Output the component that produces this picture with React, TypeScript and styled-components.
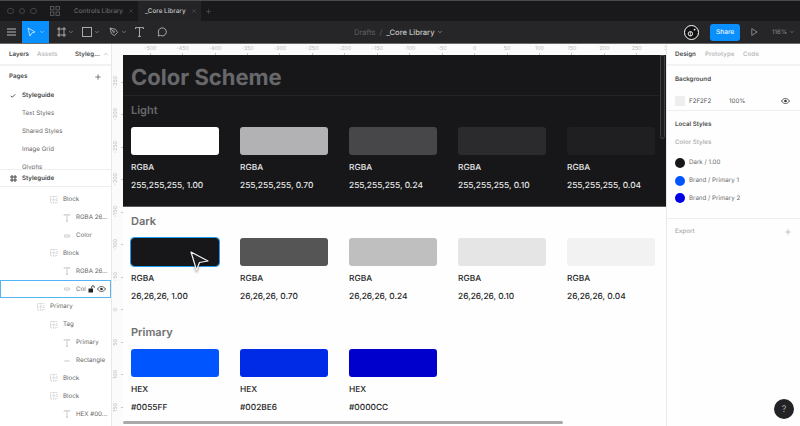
import React from 'react'
import styled, { createGlobalStyle } from 'styled-components'
import { Check, ChevronDown, ChevronUp, Plus, X } from 'lucide-react'

const GlobalStyle = createGlobalStyle`
  html, body {
    margin: 0;
    padding: 0;
    width: 800px;
    height: 426px;
    overflow: hidden;
    background: #fff;
    text-rendering: geometricPrecision;
  }
  * {
    box-sizing: border-box;
  }
`

const Page = styled.div`
  width: 800px;
  height: 426px;
  display: flex;
  flex-direction: column;
  font-family: Inter, 'Liberation Sans', sans-serif;
  overflow: hidden;
`

/* title bar */

const TitleBar = styled.div`
  height: 21px;
  flex: none;
  display: flex;
  align-items: center;
  background: #19191b;
  border-top: 1px solid #4a4a4a;
`

const Lights = styled.div`
  display: flex;
  gap: 5px;
  margin-left: 7px;
  width: 43px;
`

const Light = styled.span`
  width: 6.5px;
  height: 6.5px;
  border-radius: 50%;
  border: 1px solid #434345;
`

const Tab = styled.div<{ $active?: boolean }>`
  height: 20px;
  display: flex;
  align-items: center;
  gap: 5px;
  padding: 0 4px 0 7px;
  font-size: 6.4px;
  color: ${(p) => (p.$active ? '#c8c8c8' : '#68686a')};
  background: ${(p) => (p.$active ? '#242426' : 'transparent')};
  font-weight: 500;
  white-space: nowrap;
`

const TabIcon = styled.span<{ $left?: number; $right?: number }>`
  display: flex;
  color: #5c5c5e;
  margin-left: ${(p) => p.$left ?? 0}px;
  margin-right: ${(p) => p.$right ?? 0}px;
`

/* toolbar */

const ToolBar = styled.div`
  height: 23px;
  flex: none;
  display: flex;
  align-items: center;
  background: #262628;
  border-bottom: 1px solid #6a6a6a;
  color: #b8b8b8;
`

const Burger = styled.div`
  width: 22px;
  display: flex;
  justify-content: center;
`

const MoveTool = styled.div`
  width: 27px;
  height: 22px;
  display: flex;
  align-items: center;
  justify-content: center;
  gap: 3px;
  background: #0a8fff;
  color: #dff0ff;
  margin-right: 8px;
`

const Tool = styled.div<{ $after: number }>`
  display: flex;
  align-items: center;
  gap: 2px;
  margin-right: ${(p) => p.$after}px;
  color: #b8b8b8;
`

const Crumbs = styled.div`
  position: absolute;
  left: 354px;
  top: 21px;
  height: 22px;
  display: flex;
  align-items: center;
  gap: 4px;
  font-size: 7.6px;
  color: #5f5f61;
`

const CrumbCurrent = styled.span`
  display: flex;
  align-items: center;
  gap: 2px;
  color: #c8c8c8;
  font-weight: 500;
`

const ToolRight = styled.div`
  margin-left: auto;
  display: flex;
  align-items: center;
`

const ShareButton = styled.div`
  width: 30px;
  height: 17px;
  margin: 0 11px;
  border-radius: 3px;
  background: #0a8fff;
  color: #e6f3ff;
  font-size: 6.6px;
  font-weight: 500;
  display: flex;
  align-items: center;
  justify-content: center;
`

const ZoomLabel = styled.div`
  margin: 0 5px 0 14px;
  display: flex;
  align-items: center;
  gap: 2px;
  font-size: 6.2px;
  color: #8f8f91;
`

/* main columns */

const Main = styled.div`
  flex: 1;
  min-height: 0;
  display: flex;
  position: relative;
`

const LeftPanel = styled.aside`
  width: 112px;
  flex: none;
  background: #fff;
  border-right: 1px solid #e8e8e8;
  display: flex;
  flex-direction: column;
  overflow: hidden;
`

const PanelTabs = styled.div`
  height: 22px;
  flex: none;
  padding-left: 9px;
  display: flex;
  align-items: center;
  font-size: 6.2px;
  font-weight: 600;
  border-bottom: 2px solid #f2f2f2;
`

const PanelTab = styled.span<{ $on?: boolean; $w: number }>`
  width: ${(p) => p.$w}px;
  color: ${(p) => (p.$on ? '#4c4c4c' : '#bdbdbd')};
  display: flex;
  align-items: center;
  gap: 3px;
  white-space: nowrap;
`

const PagesHead = styled.div`
  height: 21px;
  flex: none;
  padding: 0 9px;
  display: flex;
  align-items: center;
  justify-content: space-between;
  font-size: 6.2px;
  font-weight: 600;
  color: #4c4c4c;
`

const PagesList = styled.div`
  height: 83px;
  flex: none;
  overflow: hidden;
  border-bottom: 1px solid #eeeeee;
`

const PageRow = styled.div<{ $on?: boolean }>`
  height: 17.85px;
  display: flex;
  align-items: center;
  padding-left: 22px;
  position: relative;
  font-size: 6.2px;
  font-weight: ${(p) => (p.$on ? 600 : 400)};
  color: ${(p) => (p.$on ? '#444' : '#666')};
`

const PageCheck = styled.span`
  position: absolute;
  left: 10px;
  display: flex;
  color: #222;
`

const FrameRow = styled.div`
  height: 17px;
  flex: none;
  padding-left: 10px;
  display: flex;
  align-items: center;
  gap: 5px;
  font-size: 6.2px;
  font-weight: 600;
  color: #444;
  border-bottom: 1px solid #eeeeee;
`

const LayerList = styled.div`
  padding-top: 4px;
`

const LayerRow = styled.div<{ $depth: number; $selected?: boolean }>`
  height: 17.85px;
  display: flex;
  align-items: center;
  gap: 5px;
  padding-left: ${(p) => 37 + p.$depth * 13}px;
  font-size: 6.2px;
  color: #666;
  white-space: nowrap;
  ${(p) => (p.$selected ? 'outline: 1px solid #55b4f5; outline-offset: -1px;' : '')}
`

const LayerIcon = styled.span`
  width: 8px;
  height: 8px;
  flex: none;
  display: flex;
  color: #bbbbbb;
`

const RowTools = styled.span`
  display: flex;
  align-items: center;
  gap: 2px;
  margin-left: -3px;
  color: #333;
`

const CanvasColumn = styled.div`
  width: 555px;
  flex: none;
  display: flex;
  flex-direction: column;
  min-height: 0;
`

const TopRuler = styled.div`
  height: 11px;
  flex: none;
  display: flex;
  padding-left: 22px;
  background: #fbfbfb;
  overflow: hidden;
`

const TopMark = styled.div`
  width: 32.45px;
  flex: none;
  display: flex;
  flex-direction: column;
  align-items: center;
  justify-content: flex-end;
  font-size: 5.4px;
  line-height: 8px;
  color: #bcbcbc;
  white-space: nowrap;
`

const TopTick = styled.span`
  width: 1px;
  height: 2px;
  background: #c8c8c8;
`

const CanvasRow = styled.div`
  flex: 1;
  min-height: 0;
  display: flex;
`

const SideRuler = styled.div`
  width: 11px;
  flex: none;
  padding-top: 10.75px;
  background: #fbfbfb;
  overflow: hidden;
`

const SideMark = styled.div`
  height: 32.5px;
  display: flex;
  align-items: center;
  justify-content: flex-end;
  gap: 1px;
`

const SideLabel = styled.span`
  writing-mode: vertical-rl;
  transform: rotate(180deg);
  font-size: 5.4px;
  line-height: 8px;
  color: #bcbcbc;
  white-space: nowrap;
`

const SideTick = styled.span`
  width: 2px;
  height: 1px;
  background: #c8c8c8;
`

const Canvas = styled.main`
  flex: 1;
  min-width: 0;
  position: relative;
  background: #fefefe;
  overflow: hidden;
`

const DarkSection = styled.section`
  height: 152px;
  background: #17171a;
  border-bottom: 1px solid #5a5a5a;
`

const TitleWrap = styled.div`
  height: 41px;
  padding: 5px 0 0 8px;
  display: flex;
  align-items: center;
  border-bottom: 1px solid #232325;
`

const Title = styled.h1`
  margin: 0;
  font-size: 22px;
  font-weight: 700;
  color: #68686a;
`

const Group = styled.div<{ $top: number }>`
  padding: ${(p) => p.$top}px 0 0 8px;
`

const GroupHeading = styled.h2<{ $dark?: boolean }>`
  margin: 0;
  height: 24px;
  font-size: 11px;
  line-height: 14px;
  font-weight: 600;
  color: ${(p) => (p.$dark ? '#68686a' : '#707072')};
`

const SwatchGrid = styled.div`
  display: grid;
  grid-template-columns: repeat(5, 88px);
  column-gap: 21px;
`

const Block = styled.div<{ $dark?: boolean }>`
  color: ${(p) => (p.$dark ? '#e6e6e6' : '#262628')};
  font-size: 8.4px;
  font-weight: 500;
  white-space: nowrap;
`

const Swatch = styled.div<{ $color: string; $selected?: boolean }>`
  position: relative;
  width: 88px;
  height: 28px;
  margin-bottom: 4px;
  border-radius: 3px;
  background: ${(p) => p.$color};
  ${(p) => (p.$selected ? 'outline: 1.5px solid #1f9df2;' : '')}
`

const BlockLabel = styled.div`
  height: 18px;
  line-height: 18px;
`

const Cursor = styled.svg`
  position: absolute;
  left: 58px;
  top: 12px;
  filter: drop-shadow(0 2px 1px rgba(0, 0, 0, 0.35));
`

const VerticalThumb = styled.div`
  position: absolute;
  right: 2px;
  top: 0;
  width: 5px;
  height: 84px;
  border-radius: 0 0 3px 3px;
  background: #1d1d20;
  border: 1px solid #404042;
`

const HorizontalThumb = styled.div`
  position: absolute;
  left: 0;
  bottom: 2px;
  width: 440px;
  height: 3.5px;
  border-radius: 2px;
  background: #a9a9a9;
`

const RightPanel = styled.aside`
  flex: 1;
  min-width: 0;
  background: #fefefe;
  border-left: 1px solid #e8e8e8;
  position: relative;
  margin-left: -1px;
`

const DesignTabs = styled(PanelTabs)`
  padding-left: 8px;
`

const PanelSection = styled.section<{ $last?: boolean }>`
  padding: 0 8px;
  border-bottom: ${(p) => (p.$last ? '0' : '1px solid #eeeeee')};
`

const SectionHead = styled.div<{ $muted?: boolean; $h: number }>`
  height: ${(p) => p.$h}px;
  display: flex;
  align-items: center;
  justify-content: space-between;
  font-size: 6.2px;
  font-weight: 600;
  color: ${(p) => (p.$muted ? '#b4b4b4' : '#4c4c4c')};
`

const BackgroundRow = styled.div`
  height: 18px;
  display: flex;
  align-items: center;
  font-size: 6.2px;
  color: #555;
`

const BackgroundChip = styled.span`
  width: 10px;
  height: 10px;
  background: #eeeeee;
  margin-right: 4px;
`

const BackgroundHex = styled.span`
  width: 40px;
`

const EyeSlot = styled.span`
  margin-left: auto;
  margin-right: 2px;
  display: flex;
  color: #333;
`

const StyleRow = styled.div`
  height: 17.8px;
  display: flex;
  align-items: center;
  gap: 4px;
  font-size: 6.2px;
  color: #6a6a6a;
`

const StyleDot = styled.span<{ $color: string }>`
  width: 10px;
  height: 10px;
  border-radius: 50%;
  background: ${(p) => p.$color};
`

const ColorStyleList = styled.div`
  padding: 8px 0 11px;
`

const HelpButton = styled.div`
  position: absolute;
  right: 6px;
  bottom: 7px;
  width: 20px;
  height: 20px;
  border-radius: 50%;
  background: #232325;
  color: #a8a8a8;
  font-size: 9px;
  display: flex;
  align-items: center;
  justify-content: center;
`

/* drawn icons */

const GridIcon = () => (
  <svg width="10" height="10" viewBox="0 0 10 10" fill="none" stroke="currentColor" strokeWidth="0.9">
    <rect x="0.5" y="0.5" width="3.4" height="3.4" />
    <rect x="6" y="0.5" width="3.4" height="3.4" />
    <rect x="0.5" y="6" width="3.4" height="3.4" />
    <rect x="6" y="6" width="3.4" height="3.4" />
  </svg>
)

const BurgerIcon = () => (
  <svg width="9" height="8" viewBox="0 0 9 8" stroke="currentColor" strokeWidth="1">
    <path d="M0 1h9M0 4h9M0 7h9" />
  </svg>
)

const MoveIcon = () => (
  <svg width="9" height="10" viewBox="0 0 9 10" fill="none" stroke="currentColor" strokeWidth="0.8">
    <path d="M1 1l7 4-3 .8L3 9z" strokeLinejoin="round" />
  </svg>
)

const FrameIcon = () => (
  <svg width="9" height="10" viewBox="0 0 9 10" fill="none" stroke="currentColor" strokeWidth="0.9">
    <path d="M2 0v10M7 0v10M0 2h9M0 8h9" />
  </svg>
)

const RectIcon = () => (
  <svg width="10" height="10" viewBox="0 0 10 10" fill="none" stroke="currentColor" strokeWidth="0.9">
    <rect x="0.5" y="0.5" width="9" height="9" />
  </svg>
)

const PenIcon = () => (
  <svg width="10" height="10" viewBox="0 0 10 10" fill="none" stroke="currentColor" strokeWidth="0.8">
    <path d="M1 1l5.6 1.4 2 3-3.2 3.2-3-2z" strokeLinejoin="round" />
    <path d="M1 1l3 3" />
    <circle cx="4.7" cy="4.7" r="0.8" />
  </svg>
)

const TextIcon = () => (
  <svg width="9" height="10" viewBox="0 0 9 10" fill="none" stroke="currentColor" strokeWidth="0.9">
    <path d="M0.5 2V.6h8V2M4.5.6v8.8M3 9.4h3" />
  </svg>
)

const CommentIcon = () => (
  <svg width="10" height="10" viewBox="0 0 10 10" fill="none" stroke="currentColor" strokeWidth="0.9">
    <path d="M1.2 9l.6-2.2A4 4 0 1 1 3.4 8.400z" strokeLinejoin="round" />
  </svg>
)

const SmallChevron = () => <ChevronDown size={6} strokeWidth={2} />

const PlayIcon = () => (
  <svg width="7" height="8" viewBox="0 0 7 8" fill="none" stroke="#8f8f91" strokeWidth="0.9">
    <path d="M.8.6l5.4 3.4L.8 7.4z" strokeLinejoin="round" />
  </svg>
)

const Avatar = () => (
  <svg width="15" height="15" viewBox="0 0 15 15">
    <circle cx="7.5" cy="7.5" r="7" fill="#111" stroke="#fff" strokeWidth="1" />
    <circle cx="6.4" cy="8.800" r="2.200" fill="none" stroke="#fff" strokeWidth="0.9" />
    <path d="M6.400 6.600V11" stroke="#fff" strokeWidth="0.7" />
    <circle cx="10.600" cy="4.600" r="0.900" fill="#fff" />
  </svg>
)

const HashIcon = () => (
  <svg width="7" height="7" viewBox="0 0 7 7" stroke="#444" strokeWidth="1">
    <path d="M2 0v7M5 0v7M0 2h7M0 5h7" />
  </svg>
)

const EyeIcon = () => (
  <svg width="9" height="6" viewBox="0 0 9 6" fill="none" stroke="currentColor" strokeWidth="0.8">
    <path d="M.5 3C1.500 1.300 3 .5 4.500 .5S7.500 1.300 8.500 3C7.500 4.700 6 5.500 4.500 5.500S1.500 4.700 .5 3z" />
    <circle cx="4.500" cy="3" r="1.300" fill="currentColor" stroke="none" />
  </svg>
)

const UnlockIcon = () => (
  <svg width="7" height="8" viewBox="0 0 7 8" fill="none">
    <rect x="0.500" y="3.500" width="4.500" height="4" fill="#222" />
    <path d="M3.700 3.500V2a1.300 1.300 0 0 1 2.600 0v.8" stroke="#222" strokeWidth="0.8" />
  </svg>
)

const DottedIcon = () => (
  <svg width="8" height="8" viewBox="0 0 8 8" fill="none" stroke="currentColor" strokeWidth="0.8" strokeDasharray="1 1">
    <rect x="0.5" y="0.5" width="6.5" height="6.5" />
    <path d="M3.8 0.5v6.5M0.5 3.8h6.5" />
  </svg>
)

const TextLayerIcon = () => (
  <svg width="8" height="8" viewBox="0 0 8 8" fill="none" stroke="currentColor" strokeWidth="0.8">
    <path d="M1 1.600V.8h6v.8M4 .8v6.400M3 7.200h2" />
  </svg>
)

const RectLayerIcon = () => (
  <svg width="8" height="8" viewBox="0 0 8 8" fill="none" stroke="currentColor" strokeWidth="0.8">
    <rect x="1.200" y="3" width="5.600" height="2" rx="1" />
  </svg>
)

const LineLayerIcon = () => (
  <svg width="8" height="8" viewBox="0 0 8 8" stroke="currentColor" strokeWidth="0.8">
    <path d="M1.200 4h5.600" />
  </svg>
)

type LayerKind = 'block' | 'text' | 'rect' | 'line'

const layerIcons: Record<LayerKind, React.ReactNode> = {
  block: <DottedIcon />,
  text: <TextLayerIcon />,
  rect: <RectLayerIcon />,
  line: <LineLayerIcon />
}

const layers: { name: string; depth: number; kind: LayerKind; selected?: boolean }[] = [
  { name: 'Block', depth: 1, kind: 'block' },
  { name: 'RGBA 26...', depth: 2, kind: 'text' },
  { name: 'Color', depth: 2, kind: 'rect' },
  { name: 'Block', depth: 1, kind: 'block' },
  { name: 'RGBA 26...', depth: 2, kind: 'text' },
  { name: 'Col', depth: 2, kind: 'rect', selected: true },
  { name: 'Primary', depth: 0, kind: 'block' },
  { name: 'Tag', depth: 1, kind: 'block' },
  { name: 'Primary', depth: 2, kind: 'text' },
  { name: 'Rectangle', depth: 2, kind: 'line' },
  { name: 'Block', depth: 1, kind: 'block' },
  { name: 'Block', depth: 1, kind: 'block' },
  { name: 'HEX #00...', depth: 2, kind: 'text' }
]

const pages = ['Styleguide', 'Text Styles', 'Shared Styles', 'Image Grid', 'Glyphs']

const topMarks = [-500, -450, -400, -350, -300, -250, -200, -150, -100, -50, 0, 50, 100, 150, 200, 250, 300]
const sideMarks = [-350, -300, -250, -200, -150, -100, -50, 0, 50, 100, 150]

const lightBlocks = [
  { color: '#ffffff', value: '255,255,255, 1.00' },
  { color: '#b2b1b3', value: '255,255,255, 0.70' },
  { color: '#47474a', value: '255,255,255, 0.24' },
  { color: '#2b2b2d', value: '255,255,255, 0.10' },
  { color: '#1f1f21', value: '255,255,255, 0.04' }
]

const darkBlocks = [
  { color: '#17171a', value: '26,26,26, 1.00', selected: true },
  { color: '#555556', value: '26,26,26, 0.70' },
  { color: '#c0bfc0', value: '26,26,26, 0.24' },
  { color: '#e5e5e6', value: '26,26,26, 0.10' },
  { color: '#f2f2f3', value: '26,26,26, 0.04' }
]

const primaryBlocks = [
  { color: '#0055ff', value: '#0055FF' },
  { color: '#002be6', value: '#002BE6' },
  { color: '#0000cc', value: '#0000CC' }
]

const localStyles = [
  { color: '#17171a', name: 'Dark / 1.00' },
  { color: '#0055ff', name: 'Brand / Primary 1' },
  { color: '#0000e6', name: 'Brand / Primary 2' }
]

interface SwatchesProps {
  label: string
  dark?: boolean
  items: { color: string; value: string; selected?: boolean }[]
}

const Swatches: React.FC<SwatchesProps> = ({ label, dark, items }) => (
  <SwatchGrid>
    {items.map((item) => (
      <Block key={item.value} $dark={dark}>
        <Swatch $color={item.color} $selected={item.selected}>
          {item.selected && (
            <Cursor width="20" height="22" viewBox="0 0 20 22">
              <path d="M2 2l17 9-8.500 1.500L7.500 20z" fill="#1c1c1e" stroke="#f4f4f4" strokeWidth="1.200" strokeLinejoin="round" />
            </Cursor>
          )}
        </Swatch>
        <BlockLabel>{label}</BlockLabel>
        <BlockLabel>{item.value}</BlockLabel>
      </Block>
    ))}
  </SwatchGrid>
)

export default function App() {
  return (
    <Page>
      <GlobalStyle />
      <TitleBar>
        <Lights>
          <Light />
          <Light />
          <Light />
        </Lights>
        <TabIcon $right={7}>
          <GridIcon />
        </TabIcon>
        <Tab>
          Controls Library
          <TabIcon>
            <X size={6} />
          </TabIcon>
        </Tab>
        <Tab $active>
          _Core Library
          <TabIcon>
            <X size={6} />
          </TabIcon>
        </Tab>
        <TabIcon $left={4}>
          <Plus size={7} />
        </TabIcon>
      </TitleBar>
      <ToolBar>
        <Burger>
          <BurgerIcon />
        </Burger>
        <MoveTool>
          <MoveIcon />
          <SmallChevron />
        </MoveTool>
        <Tool $after={8}>
          <FrameIcon />
          <SmallChevron />
        </Tool>
        <Tool $after={9}>
          <RectIcon />
          <SmallChevron />
        </Tool>
        <Tool $after={8}>
          <PenIcon />
          <SmallChevron />
        </Tool>
        <Tool $after={13}>
          <TextIcon />
        </Tool>
        <Tool $after={0}>
          <CommentIcon />
        </Tool>
        <Crumbs>
          Drafts <span>/</span>
          <CrumbCurrent>
            _Core Library
            <SmallChevron />
          </CrumbCurrent>
        </Crumbs>
        <ToolRight>
          <Avatar />
          <ShareButton>Share</ShareButton>
          <PlayIcon />
          <ZoomLabel>
            116%
            <SmallChevron />
          </ZoomLabel>
        </ToolRight>
      </ToolBar>
      <Main>
        <LeftPanel>
          <PanelTabs>
            <PanelTab $on $w={28}>
              Layers
            </PanelTab>
            <PanelTab $w={38}>Assets</PanelTab>
            <PanelTab $on $w={36}>
              Styleg...
              <ChevronUp size={6} color="#999" />
            </PanelTab>
          </PanelTabs>
          <PagesHead>
            Pages
            <Plus size={8} color="#444" />
          </PagesHead>
          <PagesList>
            {pages.map((page, i) => (
              <PageRow key={page} $on={i === 0}>
                {i === 0 && (
                  <PageCheck>
                    <Check size={6} strokeWidth={3} />
                  </PageCheck>
                )}
                {page}
              </PageRow>
            ))}
          </PagesList>
          <FrameRow>
            <HashIcon />
            Styleguide
          </FrameRow>
          <LayerList>
            {layers.map((layer, i) => (
              <LayerRow key={i} $depth={layer.depth} $selected={layer.selected}>
                <LayerIcon>{layerIcons[layer.kind]}</LayerIcon>
                {layer.name}
                {layer.selected && (
                  <RowTools>
                    <UnlockIcon />
                    <EyeIcon />
                  </RowTools>
                )}
              </LayerRow>
            ))}
          </LayerList>
        </LeftPanel>
        <CanvasColumn>
          <TopRuler>
            {topMarks.map((mark) => (
              <TopMark key={mark}>
                {mark}
                <TopTick />
              </TopMark>
            ))}
          </TopRuler>
          <CanvasRow>
            <SideRuler>
              {sideMarks.map((mark) => (
                <SideMark key={mark}>
                  <SideLabel>{mark}</SideLabel>
                  <SideTick />
                </SideMark>
              ))}
            </SideRuler>
            <Canvas>
              <DarkSection>
                <TitleWrap>
                  <Title>Color Scheme</Title>
                </TitleWrap>
                <Group $top={7}>
                  <GroupHeading $dark>Light</GroupHeading>
                  <Swatches label="RGBA" dark items={lightBlocks} />
                </Group>
              </DarkSection>
              <Group $top={7}>
                <GroupHeading>Dark</GroupHeading>
                <Swatches label="RGBA" items={darkBlocks} />
              </Group>
              <Group $top={19}>
                <GroupHeading>Primary</GroupHeading>
                <Swatches label="HEX" items={primaryBlocks} />
              </Group>
              <VerticalThumb />
              <HorizontalThumb />
            </Canvas>
          </CanvasRow>
        </CanvasColumn>
        <RightPanel>
          <DesignTabs>
            <PanelTab $on $w={30}>
              Design
            </PanelTab>
            <PanelTab $w={38}>Prototype</PanelTab>
            <PanelTab $w={30}>Code</PanelTab>
          </DesignTabs>
          <PanelSection>
            <SectionHead $h={26}>Background</SectionHead>
            <BackgroundRow>
              <BackgroundChip />
              <BackgroundHex>F2F2F2</BackgroundHex>
              100%
              <EyeSlot>
                <EyeIcon />
              </EyeSlot>
            </BackgroundRow>
          </PanelSection>
          <PanelSection>
            <SectionHead $h={27}>Local Styles</SectionHead>
            <SectionHead $h={8} $muted>
              Color Styles
            </SectionHead>
            <ColorStyleList>
              {localStyles.map((style) => (
                <StyleRow key={style.name}>
                  <StyleDot $color={style.color} />
                  {style.name}
                </StyleRow>
              ))}
            </ColorStyleList>
          </PanelSection>
          <PanelSection $last>
            <SectionHead $h={25} $muted>
              Export
              <Plus size={8} color="#aaa" />
            </SectionHead>
          </PanelSection>
          <HelpButton>?</HelpButton>
        </RightPanel>
      </Main>
    </Page>
  )
}
